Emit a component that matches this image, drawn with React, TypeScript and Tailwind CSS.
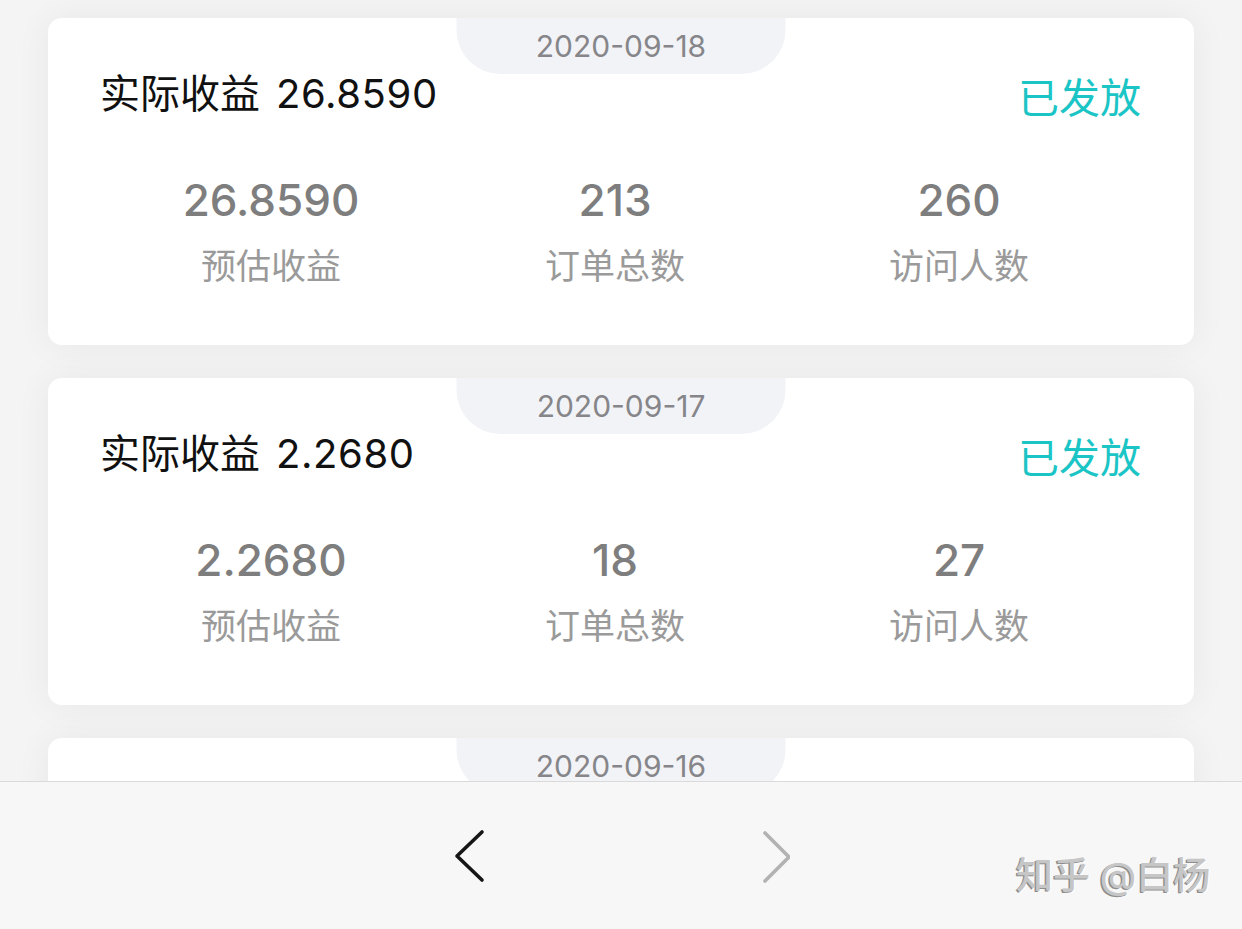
import React from "react";

type Rec = { date: string; actual: string; est: string; orders: string; visits: string; full: boolean };

const records: Rec[] = [
  { date: "2020-09-18", actual: "26.8590", est: "26.8590", orders: "213", visits: "260", full: true },
  { date: "2020-09-17", actual: "2.2680", est: "2.2680", orders: "18", visits: "27", full: true },
  { date: "2020-09-16", actual: "", est: "", orders: "", visits: "", full: false },
];

const FONT = "font-['Inter','Noto_Sans_CJK_SC',sans-serif]";

function Card({ r }: { r: Rec }) {
  return (
    <div className="relative h-[327px] shrink-0 rounded-[14px] bg-white shadow-[0_0_36px_rgba(0,0,0,0.055)]">
      <div className="absolute left-1/2 top-0 flex h-[56px] w-[329px] -translate-x-1/2 items-center justify-center rounded-b-[44px] bg-[#f2f3f7] pb-[1px] text-[30px] leading-[24px] text-[#86868a]">
        {r.date}
      </div>
      {r.full && (
        <>
          <div className="box-content flex h-[48px] items-center justify-between pl-[52px] pr-[53px] pt-[52px]">
            <div className="text-[40px] leading-none text-[#111]">
              实际收益<span className="ml-[16px] tracking-[0.6px]">{r.actual}</span>
            </div>
            <div className="mt-[8px] text-[41px] leading-none text-[#1bc5c6]">已发放</div>
          </div>
          <div className="mt-[54px] grid grid-cols-[repeat(3,344px)] pl-[51px]">
            {[
              [r.est, "预估收益"],
              [r.orders, "订单总数"],
              [r.visits, "访问人数"],
            ].map(([v, l]) => (
              <div key={l} className="flex flex-col items-center">
                <div className="flex h-[56px] items-center text-[44px] font-medium leading-none text-[#7e7e7e]">{v}</div>
                <div className="mt-[16px] flex h-[44px] items-center text-[35px] leading-none text-[#9a9a9a]">{l}</div>
              </div>
            ))}
          </div>
        </>
      )}
    </div>
  );
}

export default function App() {
  return (
    <div className={`flex h-[929px] w-[1242px] flex-col overflow-hidden bg-[#f4f4f4] ${FONT}`}>
      <div className="flex flex-1 flex-col gap-[33px] overflow-hidden px-[48px] pt-[18px]">
        {records.map((r) => (
          <Card key={r.date} r={r} />
        ))}
      </div>
      <div className="relative h-[148px] shrink-0 border-t border-[#dadada] bg-[#f7f7f7]">
        <div className="flex items-start gap-[270px] pl-[452px] pt-[47px]">
          <svg width="34" height="54" viewBox="0 0 34 54" fill="none">
            <polyline points="30,3 5,27 30,51" stroke="#161616" strokeWidth="3.6" strokeLinecap="round" strokeLinejoin="round" />
          </svg>
          <svg width="34" height="54" viewBox="0 0 34 54" fill="none">
            <polyline points="9,4 33,28 9,52" stroke="#b2b2b2" strokeWidth="3.6" strokeLinecap="round" strokeLinejoin="round" />
          </svg>
        </div>
        <div className="absolute left-[1016px] top-[75px] whitespace-nowrap text-[37px] font-medium leading-none text-[#c6c6c6] [text-shadow:-1.5px_0.5px_0_#8e8e8e,1px_1px_0_#ffffff]">
          知乎 @白杨
        </div>
      </div>
    </div>
  );
}
